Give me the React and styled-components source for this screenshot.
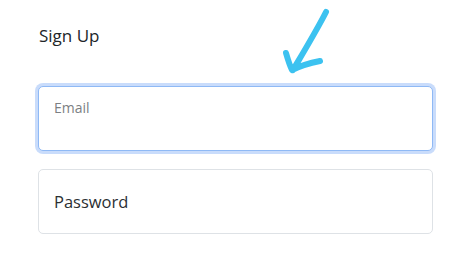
import React from "react";
import styled, { createGlobalStyle } from "styled-components";

const Global = createGlobalStyle`
  html, body { margin: 0; padding: 0; background: #fff; }
  body { font-family: "Open Sans", "Noto Sans", sans-serif; color: #212529; }
`;

const Page = styled.div`
  position: relative;
  width: 474px;
  height: 279px;
  padding: 24px 0 0 38px;
  box-sizing: border-box;
`;

const Title = styled.h1`
  margin: 0 0 38px 1px;
  font-size: 17px;
  font-weight: 400;
  line-height: 24px;
  color: #212529;
`;

const Form = styled.div`
  display: flex;
  flex-direction: column;
  gap: 18px;
  width: 395px;
`;

const Field = styled.div`
  position: relative;
  box-sizing: border-box;
  height: 65px;
  border: 1px solid ${(p) => (p.$focused ? "#8fb9f5" : "#dee2e6")};
  border-radius: 5px;
  background: #fff;
  box-shadow: ${(p) => (p.$focused ? "0 0 0 3px rgba(60,130,240,0.28)" : "none")};
  display: flex;
  align-items: ${(p) => (p.$focused ? "flex-start" : "center")};
  padding: ${(p) => (p.$focused ? "11px 15px 0" : "0 15px")};
`;

const Label = styled.span`
  font-size: ${(p) => (p.$small ? "14px" : "16.5px")};
  color: ${(p) => (p.$small ? "#7c7f83" : "#2b2f33")};
  line-height: 20px;
`;

const Arrow = styled.svg`
  position: absolute;
  left: 280px;
  top: 6px;
`;

export default function App() {
  return (
    <>
      <Global />
      <Page>
        <Title>Sign Up</Title>
        <Form>
          <Field $focused>
            <Label $small>Email</Label>
          </Field>
          <Field>
            <Label>Password</Label>
          </Field>
        </Form>
        <Arrow width="56" height="70" viewBox="280 6 56 70">
          <path
            d="M326 12 C318 28 306 48 293 70 M286 53 C288 60 290 66 292 70 C300 66 310 63 320 61"
            fill="none"
            stroke="#3cc2f0"
            strokeWidth="6"
            strokeLinecap="round"
            strokeLinejoin="round"
          />
        </Arrow>
      </Page>
    </>
  );
}
